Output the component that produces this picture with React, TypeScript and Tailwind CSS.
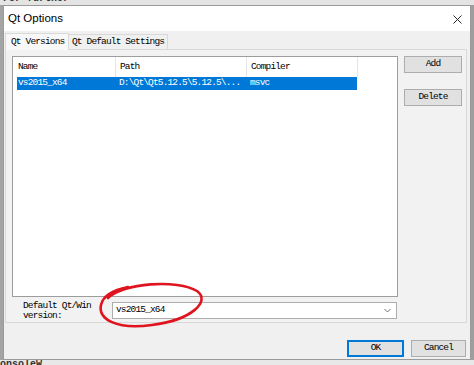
import React from "react";

const mono = "font-['Liberation_Mono','DejaVu_Sans_Mono',monospace] text-[9.5px] tracking-[-0.85px] text-black";

function Btn({ label, focused }: { label: string; focused?: boolean }) {
  return (
    <div
      className={`h-[17px] flex items-center justify-center bg-[#e1e1e1] ${mono} ${
        focused ? "border-2 border-[#0078d7]" : "border border-[#adadad]"
      }`}
    >
      {label}
    </div>
  );
}

export default function App() {
  return (
    <div className="relative w-[474px] h-[365px] overflow-hidden bg-[#e6e6e6] flex flex-col">
      {/* strip of the window behind, top */}
      <div className="h-[5px] overflow-hidden bg-[#e4e4e4] pl-[3px]">
        <div className="-mt-[6px] font-['Liberation_Mono',monospace] text-[10px] font-bold text-[#333] leading-[10px]">For further</div>
      </div>

      <div className="flex h-[355px]">
        <div className="w-[3px] bg-[#a4a4a4]" />

        {/* ── DIALOG ── */}
        <div className="w-[468px] border border-[#9a9a9a] flex flex-col bg-[#f0f0f0]">
          {/* title bar */}
          <div className="h-[25px] bg-white flex items-center justify-between pl-[4px] pr-[8px]">
            <span className="font-['Liberation_Sans',Arial,sans-serif] text-[11.5px] text-black">Qt Options</span>
            <svg width="9" height="9" viewBox="0 0 9 9" className="mt-[1px]">
              <path d="M0.5 0.5 L8.5 8.5 M8.5 0.5 L0.5 8.5" stroke="#111" strokeWidth="0.9" fill="none" />
            </svg>
          </div>

          {/* tabs */}
          <div className="flex items-end pl-[1px] h-[18px]">
            <div className={`relative z-10 h-[17px] w-[64px] bg-[#f8f8f8] border border-b-0 border-[#d9d9d9] flex items-center pl-[5px] -mb-[1px] ${mono}`}>
              Qt Versions
            </div>
            <div className={`h-[15px] w-[99px] bg-[#f0f0f0] border border-l-0 border-b-0 border-[#d9d9d9] flex items-center pl-[3px] ${mono}`}>
              Qt Default Settings
            </div>
          </div>

          {/* tab panel */}
          <div className="ml-[1px] w-[462px] h-[274px] border border-[#d9d9d9] bg-[#f2f2f2] flex flex-col pt-[6px] pl-[6px] pr-[4px] pb-[4px]">
            <div className="flex gap-[6px]">
              {/* version list */}
              <div className="w-[386px] h-[241px] border border-[#9d9d9d] bg-white flex flex-col">
                <div className={`flex h-[20px] ${mono}`}>
                  <div className="w-[103px] border-r border-[#e5e5e5] flex items-center pl-[5px]">Name</div>
                  <div className="w-[131px] border-r border-[#e5e5e5] flex items-center pl-[4px]">Path</div>
                  <div className="w-[111px] border-r border-[#e5e5e5] flex items-center pl-[4px]">Compiler</div>
                </div>
                <div className="pl-[4px]">
                  <div className={`flex h-[13px] w-[340px] bg-[#0078d7] ${mono} text-white`}>
                    <div className="w-[98px] flex items-center pl-[1px] text-white">vs2015_x64</div>
                    <div className="w-[131px] flex items-center pl-[4px] text-white">D:\Qt\Qt5.12.5\5.12.5\...</div>
                    <div className="w-[111px] flex items-center pl-[4px] text-white">msvc</div>
                  </div>
                </div>
              </div>

              {/* side buttons */}
              <div className="w-[58px] flex flex-col gap-[16px]">
                <Btn label="Add" />
                <Btn label="Delete" />
              </div>
            </div>

            {/* default version */}
            <div className="flex items-center mt-[5px] h-[17px]">
              <div className={`w-[100px] pl-[11px] leading-[10px] ${mono}`}>
                Default Qt/Win<br />version:
              </div>
              <div className="w-[285px] h-[17px] border border-[#adadad] bg-white flex items-center justify-between pl-[3px] pr-[5px]">
                <span className={mono}>vs2015_x64</span>
                <svg width="7" height="5" viewBox="0 0 7 5">
                  <path d="M0.5 1 L3.5 4 L6.5 1" stroke="#666" strokeWidth="0.9" fill="none" />
                </svg>
              </div>
            </div>
          </div>

          {/* dialog buttons */}
          <div className="flex justify-end gap-[7px] pt-[17px] pr-[4px]">
            <div className="w-[57px]"><Btn label="OK" focused /></div>
            <div className="w-[55px]"><Btn label="Cancel" /></div>
          </div>
        </div>

        <div className="w-[3px] bg-[#9e9e9e]" />
      </div>

      {/* strip of the window behind, bottom */}
      <div className="h-[5px] overflow-hidden bg-[#e8e8e8]">
        <div className="font-['Liberation_Mono',monospace] text-[10px] font-bold text-[#333] leading-[10px]">onsoleW</div>
      </div>

      {/* red hand-drawn mark */}
      <svg className="absolute inset-0 pointer-events-none" width="474" height="365" viewBox="0 0 474 365">
        <path
          d="M108 298 C 122 283, 178 279, 197 291 C 211 301, 192 320, 152 325 C 116 330, 98 319, 101 305 C 103 296, 113 290, 128 287"
          stroke="#e0141f"
          strokeWidth="2.6"
          fill="none"
          strokeLinecap="round"
        />
      </svg>
    </div>
  );
}
